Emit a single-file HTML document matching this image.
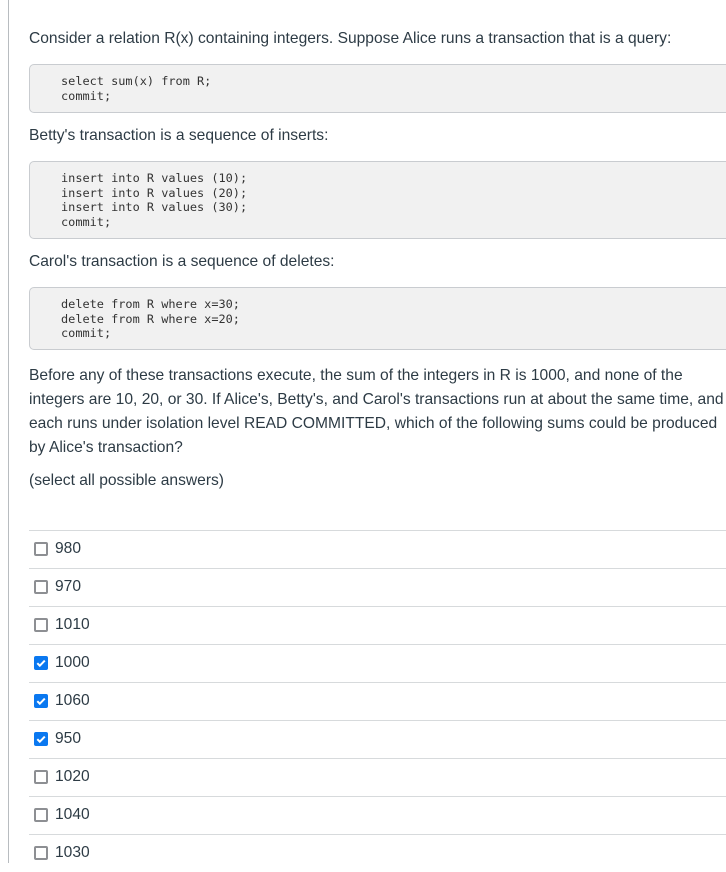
<!DOCTYPE html>
<html><head><style>
body{margin:0;width:726px;height:863px;overflow:hidden;background:#fff;font-family:"Liberation Sans",sans-serif;color:#2d3b45;position:relative}
.vl{position:absolute;left:8px;top:0;width:1px;height:863px;background:#b8bcc0}
.t{position:absolute;left:29px;font-size:15.6px;white-space:nowrap}
.code{position:absolute;left:29px;width:720px;background:#f1f1f1;border:1px solid #c9ccd0;border-radius:5px;box-sizing:border-box}
.code pre{margin:0;position:absolute;left:31px;font-family:"DejaVu Sans Mono",monospace;font-size:11.9px;line-height:14.5px;color:#333}
.row{position:absolute;left:29px;width:720px;height:38px;border-top:1px solid #d7dadc;box-sizing:border-box}
.cb{position:absolute;left:5px;top:11px;width:14px;height:14px;box-sizing:border-box;border:2px solid #8d8f93;border-radius:2px}
.cb.on{background:#0a78f0;border:none}
.row span{position:absolute;left:26px;top:9px;font-size:15.6px}
</style></head><body>
<div class="vl"></div>
<div class="t" style="top:30px">Consider a relation R(x) containing integers. Suppose Alice runs a transaction that is a query:</div>
<div class="code" style="top:64px;height:49px"><pre style="top:9px">select sum(x) from R;
commit;</pre></div>
<div class="t" style="top:127px">Betty's transaction is a sequence of inserts:</div>
<div class="code" style="top:161px;height:78px"><pre style="top:9px">insert into R values (10);
insert into R values (20);
insert into R values (30);
commit;</pre></div>
<div class="t" style="top:253px">Carol's transaction is a sequence of deletes:</div>
<div class="code" style="top:287px;height:63px"><pre style="top:9px">delete from R where x=30;
delete from R where x=20;
commit;</pre></div>
<div class="t" style="top:364px;line-height:24px">Before any of these transactions execute, the sum of the integers in R is 1000, and none of the<br>integers are 10, 20, or 30. If Alice's, Betty's, and Carol's transactions run at about the same time, and<br>each runs under isolation level READ COMMITTED, which of the following sums could be produced<br>by Alice's transaction?</div>
<div class="t" style="top:472px">(select all possible answers)</div>
<div class="row" style="top:530px"><div class="cb"></div><span>980</span></div>
<div class="row" style="top:568px"><div class="cb"></div><span>970</span></div>
<div class="row" style="top:606px"><div class="cb"></div><span>1010</span></div>
<div class="row" style="top:644px"><div class="cb on"><svg width="14" height="14" viewBox="0 0 14 14"><path d="M3.3 7.2l2.5 2.5L10.8 4.6" stroke="#fff" stroke-width="2" fill="none"/></svg></div><span>1000</span></div>
<div class="row" style="top:682px"><div class="cb on"><svg width="14" height="14" viewBox="0 0 14 14"><path d="M3.3 7.2l2.5 2.5L10.8 4.6" stroke="#fff" stroke-width="2" fill="none"/></svg></div><span>1060</span></div>
<div class="row" style="top:720px"><div class="cb on"><svg width="14" height="14" viewBox="0 0 14 14"><path d="M3.3 7.2l2.5 2.5L10.8 4.6" stroke="#fff" stroke-width="2" fill="none"/></svg></div><span>950</span></div>
<div class="row" style="top:758px"><div class="cb"></div><span>1020</span></div>
<div class="row" style="top:796px"><div class="cb"></div><span>1040</span></div>
<div class="row" style="top:834px"><div class="cb"></div><span>1030</span></div>
</body></html>
